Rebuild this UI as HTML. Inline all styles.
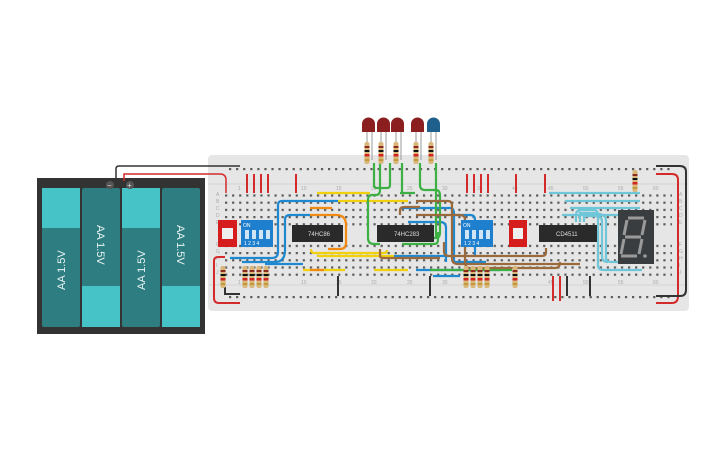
<!DOCTYPE html>
<html><head><meta charset="utf-8"><style>
html,body{margin:0;padding:0;background:#fff;width:725px;height:453px;overflow:hidden}
svg{display:block}
text{font-family:"Liberation Sans",sans-serif}
</style></head><body>
<svg width="725" height="453" viewBox="0 0 725 453" xmlns="http://www.w3.org/2000/svg">
<defs>
<pattern id="h" x="225" y="0" width="7.07" height="7.2" patternUnits="userSpaceOnUse">
<rect x="0" y="0" width="2.2" height="2.2" fill="#5a5a5a"/></pattern>
<pattern id="r" x="229" y="0" width="7.07" height="8" patternUnits="userSpaceOnUse">
<rect x="0" y="0" width="2.2" height="2.2" fill="#5a5a5a"/></pattern>
<g id="res"><rect x="-2.5" y="0" width="5" height="22" rx="2" fill="#d9b77a"/>
<rect x="-2.5" y="4" width="5" height="2" fill="#8b2b1b"/><rect x="-2.5" y="8" width="5" height="2" fill="#111"/><rect x="-2.5" y="12" width="5" height="2.5" fill="#d0241c"/><rect x="-2.5" y="17" width="5" height="2" fill="#c29a3a"/></g>
</defs>
<rect x="208" y="155" width="481" height="156" rx="4" fill="#e6e6e6"/>
<line x1="209" y1="184" x2="688" y2="184" stroke="#d4d4d4"/>
<line x1="209" y1="285" x2="688" y2="285" stroke="#d4d4d4"/>
<rect x="225" y="164" width="447" height="12" fill="url(#r)"/>
<rect x="225" y="291" width="447" height="12" fill="url(#r)"/>
<rect x="225" y="192" width="447" height="36" fill="url(#h)"/>
<rect x="225" y="242" width="447" height="36" fill="url(#h)"/>
<g fill="#aaa" font-size="5">
<text x="238" y="190">1</text><text x="301" y="190">10</text><text x="336" y="190">15</text><text x="371" y="190">20</text><text x="407" y="190">25</text><text x="442" y="190">30</text><text x="477" y="190">35</text><text x="512" y="190">40</text><text x="548" y="190">45</text><text x="583" y="190">50</text><text x="618" y="190">55</text><text x="653" y="190">60</text>
<text x="238" y="284">1</text><text x="301" y="284">10</text><text x="336" y="284">15</text><text x="371" y="284">20</text><text x="407" y="284">25</text><text x="442" y="284">30</text><text x="477" y="284">35</text><text x="512" y="284">40</text><text x="548" y="284">45</text><text x="583" y="284">50</text><text x="618" y="284">55</text><text x="653" y="284">60</text>
<text x="216" y="196">A</text><text x="216" y="203">B</text><text x="216" y="210">C</text><text x="216" y="217">D</text><text x="216" y="224">E</text>
<text x="216" y="246">F</text><text x="216" y="253">G</text><text x="216" y="260">H</text><text x="216" y="267">I</text><text x="216" y="274">J</text>
<text x="679" y="196">A</text><text x="679" y="203">B</text><text x="679" y="210">C</text><text x="679" y="217">D</text><text x="679" y="224">E</text>
<text x="679" y="246">F</text><text x="679" y="253">G</text><text x="679" y="260">H</text><text x="679" y="267">I</text><text x="679" y="274">J</text>
</g>
<rect x="37" y="178" width="168" height="156" fill="#333"/>
<g>
<rect x="42" y="188" width="38" height="139" rx="2" fill="#2e7d80"/><rect x="42" y="188" width="38" height="40" fill="#45c3c6"/>
<rect x="82" y="188" width="38" height="139" rx="2" fill="#2e7d80"/><rect x="82" y="286" width="38" height="41" fill="#45c3c6"/>
<rect x="122" y="188" width="38" height="139" rx="2" fill="#2e7d80"/><rect x="122" y="188" width="38" height="40" fill="#45c3c6"/>
<rect x="162" y="188" width="38" height="139" rx="2" fill="#2e7d80"/><rect x="162" y="286" width="38" height="41" fill="#45c3c6"/>
</g>
<g fill="#e8f4f4" font-size="11">
<text transform="translate(65,290) rotate(-90)">AA 1.5V</text>
<text transform="translate(97,225) rotate(90)">AA 1.5V</text>
<text transform="translate(145,290) rotate(-90)">AA 1.5V</text>
<text transform="translate(177,225) rotate(90)">AA 1.5V</text>
</g>
<circle cx="110" cy="185" r="4" fill="#555"/><circle cx="130" cy="185" r="4" fill="#555"/>
<text x="107" y="188" fill="#ddd" font-size="8">−</text><text x="127" y="188" fill="#ddd" font-size="8">+</text>
<path d="M116 181 V169 Q116 166 119 166 H240" fill="none" stroke="#333" stroke-width="1.5"/>
<path d="M124 181 V174 H220 Q226 174 226 180 V193" fill="none" stroke="#d42a2a" stroke-width="1.5"/>
<g stroke="#d42a2a" stroke-width="2" fill="none">
<path d="M247 174V193M254 174V193M261 174V193M268 174V193M296 174V193"/>
<path d="M467 174V193M474 174V193M481 174V193M488 174V193M516 174V193M545 174V193"/>
<path d="M553 301V276M560 301V276"/>
<path d="M656 174H672Q678 174 678 180V296Q678 303 672 303H656"/>
<path d="M225 257H218Q214 257 214 261V298Q214 303 219 303H240"/>
</g>
<g stroke="#333" stroke-width="2" fill="none">
<path d="M338 276V296M430 276V296M567 276V296M590 276V296"/>
<path d="M656 166H680Q686 166 686 172V290Q686 296 680 296H656"/>
<path d="M225 287V294H240"/>
</g>
<g stroke-width="2.2" fill="none">
<path d="M317 193H370M338 201H408M317 256H406M303 270H345M374 270H408" stroke="#f1d10e"/>
<path d="M311 249Q311 253 314 253H384Q387 253 387 250" stroke="#f1d10e"/>
<path d="M310 208H332M310 270H324M310 215H336Q346 215 346 225V243Q346 249 340 249H328" stroke="#f08a12"/>
<path d="M338 201H282Q278 201 278 205V252Q278 258 272 258H230" stroke="#1e88d0"/>
<path d="M310 215H290Q285 215 285 220V250Q285 262 275 262H242" stroke="#1e88d0"/>
<path d="M303 264H265M402 208H450Q454 208 454 214V262H486M408 222H440Q446 222 446 228V262M394 256H450" stroke="#1e88d0"/>
<path d="M416 270H500M433 276H460" stroke="#1e88d0"/>
<path d="M455 215H470Q475 215 475 220V256" stroke="#1e88d0"/>
<path d="M374 163V185Q374 188 377 188H387Q390 188 390 185V163" stroke="#3cb043"/>
<path d="M380 163V190Q380 195 376 195H372Q368 195 368 200V238Q368 244 374 244H380" stroke="#3cb043"/>
<path d="M402 163V193M420 163V185Q420 190 425 190H436Q440 190 440 196V232Q440 238 436 238H430" stroke="#3cb043"/>
<path d="M436 163V238M402 244H434Q438 244 438 240V232M430 270H512M400 193H415" stroke="#3cb043"/>
<path d="M416 201H448Q452 201 452 206V258Q452 264 458 264H580" stroke="#9a6a3c"/>
<path d="M416 215H460Q465 215 465 220V262Q465 268 470 268H555Q560 268 560 262" stroke="#9a6a3c"/>
<path d="M380 249V256Q380 258 384 258H440M444 242V252Q444 256 450 256H542Q546 256 546 252V248" stroke="#9a6a3c"/>
<path d="M400 215V210Q400 207 405 207H420" stroke="#9a6a3c"/>
<path d="M549 193H640M565 201H640M570 208H640M562 215H620" stroke="#6ec6d8"/>
<path d="M576 222V215Q576 210 582 210H594Q598 210 598 216V265Q598 270 604 270H642M580 222V213Q580 213 590 213Q606 213 606 220V258Q606 262 612 262H620M584 222V216H596Q602 216 602 222V256Q602 262 608 262" stroke="#6ec6d8"/>
</g>
<rect x="241" y="220" width="32" height="27" fill="#1e7fce"/>
<rect x="461" y="220" width="32" height="27" fill="#1e7fce"/>
<g fill="#cfe5f6"><rect x="245" y="230" width="4" height="9"/><rect x="252" y="230" width="4" height="9"/><rect x="259" y="230" width="4" height="9"/><rect x="266" y="230" width="4" height="9"/>
<rect x="465" y="230" width="4" height="9"/><rect x="472" y="230" width="4" height="9"/><rect x="479" y="230" width="4" height="9"/><rect x="486" y="230" width="4" height="9"/></g>
<g fill="#fff" font-size="5"><text x="243" y="227">ON</text><text x="244" y="245">1 2 3 4</text><text x="463" y="227">ON</text><text x="464" y="245">1 2 3 4</text></g>
<rect x="218" y="220" width="19" height="27" fill="#d51d1d"/><rect x="222" y="228" width="11" height="11" fill="#eee"/>
<rect x="509" y="220" width="18" height="27" fill="#d51d1d"/><rect x="513" y="228" width="10" height="11" fill="#eee"/>
<g fill="#2a2a2a"><rect x="292" y="225" width="51" height="17"/><rect x="377" y="225" width="57" height="17"/><rect x="539" y="225" width="58" height="17"/></g>
<g fill="#ddd" font-size="6"><text x="308" y="236">74HC86</text><text x="394" y="236">74HC283</text><text x="556" y="236">CD4511</text></g>
<rect x="618" y="210" width="36" height="54" fill="#3a3d40"/>
<g stroke="#9a9a9a" stroke-width="3" fill="none"><path d="M628 218H644M627 220L624 235M645 220L642 235M625 237H641M624 239L621 254M642 239L639 254M621 256H637"/></g>
<circle cx="645" cy="256" r="1.8" fill="#9a9a9a"/>
<use href="#res" x="223" y="266"/><use href="#res" x="245" y="266"/><use href="#res" x="252" y="266"/><use href="#res" x="259" y="266"/><use href="#res" x="266" y="266"/>
<use href="#res" x="466" y="266"/><use href="#res" x="473" y="266"/><use href="#res" x="480" y="266"/><use href="#res" x="487" y="266"/><use href="#res" x="515" y="266"/>
<use href="#res" x="635" y="170"/>
<use href="#res" x="367" y="142"/><use href="#res" x="381" y="142"/><use href="#res" x="396" y="142"/><use href="#res" x="416" y="142"/><use href="#res" x="431" y="142"/>
<g fill="#8b1e1e"><path d="M362 132V124A6.5 6.5 0 0 1 375 124V132Z"/><path d="M377 132V124A6.5 6.5 0 0 1 390 124V132Z"/><path d="M391 132V124A6.5 6.5 0 0 1 404 124V132Z"/><path d="M411 132V124A6.5 6.5 0 0 1 424 124V132Z"/></g>
<path d="M427 132V124A6.5 6.5 0 0 1 440 124V132Z" fill="#1f5f8b"/>
<g stroke="#999" stroke-width="1"><path d="M367 132V142M372 132V160M381 132V142M386 132V160M396 132V142M401 132V160M416 132V142M421 132V160M431 132V142M436 132V160"/></g>
</svg>
</body></html>
